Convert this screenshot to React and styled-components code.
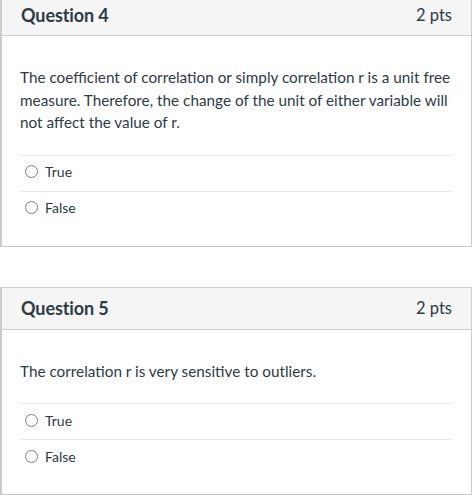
import React from "react";
import styled, { createGlobalStyle } from "styled-components";

const Global = createGlobalStyle`
  html, body { margin: 0; padding: 0; background: #fff; }
  body { font-family: Lato, "Open Sans", sans-serif; color: #2d3b45; }
`;

const Page = styled.div`
  display: flex;
  flex-direction: column;
  gap: 40px;
  margin-top: -7px;
  width: 472px;
`;

const Card = styled.section`
  border: 1px solid #c7cdd1;
  border-left-width: 2px;
  background: #fff;
`;

const Header = styled.header`
  display: flex;
  align-items: center;
  justify-content: space-between;
  height: 42px;
  box-sizing: border-box;
  padding: 0 19px 0 19px;
  background: #f5f5f5;
  border-bottom: 1px solid #c7cdd1;
`;

const Title = styled.h2`
  margin: 0;
  font-size: 18px;
  font-weight: 700;
  letter-spacing: -0.1px;
`;

const Points = styled.span`
  font-size: 16.5px;
  font-weight: 400;
`;

const Body = styled.div`
  padding: 30px 19px 19px 18px;
`;

const Prompt = styled.p`
  margin: 0 0 21px;
  font-size: 15.3px;
  line-height: 22.5px;
`;

const Answers = styled.div`
  display: flex;
  flex-direction: column;
`;

const Answer = styled.label`
  display: flex;
  align-items: center;
  gap: 7px;
  height: 36px;
  box-sizing: border-box;
  padding: 0 0 3px 5px;
  border-top: 1px solid #e4e7e9;
  font-size: 14px;
`;

const Radio = styled.span`
  width: 11px;
  height: 11px;
  border-radius: 50%;
  border: 1px solid #737f88;
  background: #fff;
  flex: none;
`;

const questions = [
  {
    n: 4,
    text:
      "The coefficient of correlation or simply correlation r is a unit free measure. Therefore, the change of the unit of either variable will not affect the value of r.",
  },
  { n: 5, text: "The correlation r is very sensitive to outliers." },
];

export default function App() {
  return (
    <>
      <Global />
      <Page>
        {questions.map((q) => (
          <Card key={q.n}>
            <Header>
              <Title>Question {q.n}</Title>
              <Points>2 pts</Points>
            </Header>
            <Body>
              <Prompt>{q.text}</Prompt>
              <Answers>
                {["True", "False"].map((a) => (
                  <Answer key={a}>
                    <Radio />
                    {a}
                  </Answer>
                ))}
              </Answers>
            </Body>
          </Card>
        ))}
      </Page>
    </>
  );
}
